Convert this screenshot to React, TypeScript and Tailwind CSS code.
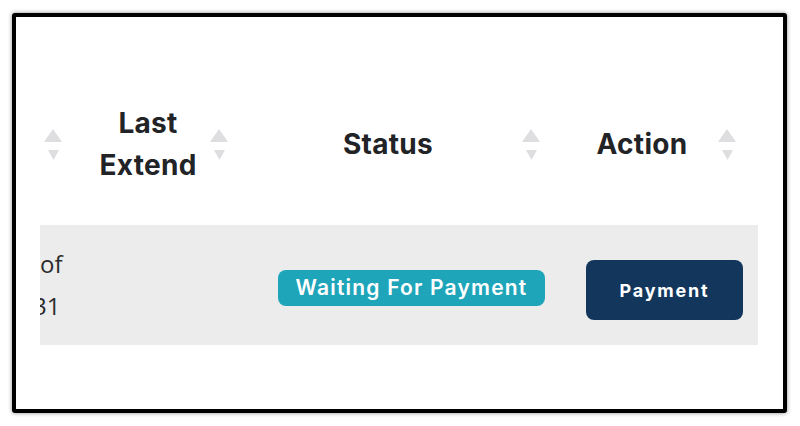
import React from "react";

function SortArrows() {
  return (
    <div className="flex w-[18px] flex-col items-center gap-[8px]">
      <svg width="18" height="13" viewBox="0 0 18 13">
        <polygon points="9,0 18,13 0,13" fill="#dedee0" />
      </svg>
      <svg width="11" height="10" viewBox="0 0 11 10">
        <polygon points="0,0 11,0 5.5,10" fill="#dedee0" />
      </svg>
    </div>
  );
}

function HeaderCell({
  label,
  textWidth,
  padLeft,
}: {
  label: React.ReactNode;
  textWidth: string;
  padLeft: string;
}) {
  return (
    <div className={`flex items-center ${padLeft}`}>
      <div
        className={`${textWidth} text-center text-[28px] font-bold leading-[42px] tracking-[0.3px] text-[#222326]`}
      >
        {label}
      </div>
      <SortArrows />
    </div>
  );
}

export default function App() {
  return (
    <div className="h-[426px] w-[800px] bg-white pl-[12px] pt-[13px]">
      <div
        className="h-[400px] w-[775px] rounded-[3px] border-4 border-black bg-white pt-[85px] shadow-[0_0_4px_rgba(0,0,0,0.45)]"
        style={{ fontFamily: "Inter, 'Noto Sans', sans-serif" }}
      >
        <div className="ml-[24px] mr-[25px]">
          {/* header */}
          <div className="flex h-[84px] items-center">
            <div className="flex items-center pl-[4px]">
              <SortArrows />
            </div>
            <HeaderCell
              padLeft="pl-[24px]"
              textWidth="w-[124px]"
              label={
                <>
                  Last
                  <br />
                  Extend
                </>
              }
            />
            <HeaderCell padLeft="pl-[26px]" textWidth="w-[268px]" label="Status" />
            <HeaderCell padLeft="pl-[26px]" textWidth="w-[152px]" label="Action" />
          </div>

          {/* row */}
          <div className="mt-[39px] flex h-[120px] items-center bg-[#ececed]">
            <div
              className="w-[46px] shrink-0 overflow-hidden text-[24px] leading-[42px] text-[#2c2c2e]"
              style={{ fontFamily: "'Open Sans', 'Noto Sans', sans-serif" }}
            >
              <div className="whitespace-nowrap">of</div>
              <div className="-ml-[7px] whitespace-nowrap">31</div>
            </div>
            <div className="w-[192px] shrink-0" />
            <div className="w-[308px] shrink-0 pt-[6px]">
              <span className="inline-flex h-[36px] w-[267px] items-center justify-center rounded-[8px] bg-[#1fa5ba] text-[21px] font-semibold tracking-[1.2px] text-white">
                Waiting For Payment
              </span>
            </div>
            <div className="pt-[10px]">
              <button className="flex h-[60px] w-[157px] items-center justify-center rounded-[8px] bg-[#12365c] text-[18px] font-bold tracking-[1.8px] text-white">
                Payment
              </button>
            </div>
          </div>
        </div>
      </div>
    </div>
  );
}
